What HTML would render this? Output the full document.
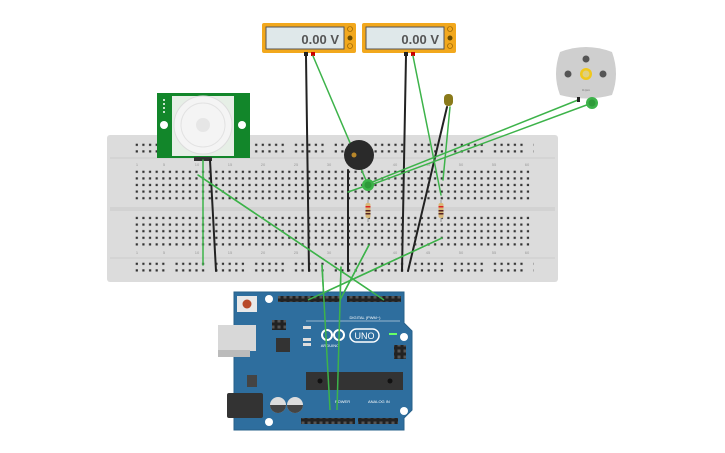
<!DOCTYPE html>
<html><head><style>body{margin:0;background:#fff;}svg{display:block;font-family:"Liberation Sans",sans-serif}</style></head><body>
<svg width="725" height="453" viewBox="0 0 725 453" xmlns="http://www.w3.org/2000/svg">
<defs>
<pattern id="h" x="134.5" y="169.5" width="6.63" height="6.6" patternUnits="userSpaceOnUse"><rect x="1.2" y="1.2" width="2.2" height="2.2" fill="#333"/></pattern>
<pattern id="r" x="134.5" y="142.5" width="39.8" height="6.6" patternUnits="userSpaceOnUse"><g fill="#333"><rect x="1.2" y="1.2" width="2.2" height="2.2"/><rect x="7.8" y="1.2" width="2.2" height="2.2"/><rect x="14.5" y="1.2" width="2.2" height="2.2"/><rect x="21.1" y="1.2" width="2.2" height="2.2"/><rect x="27.7" y="1.2" width="2.2" height="2.2"/></g></pattern>
<pattern id="r2" x="134.5" y="261.5" width="39.8" height="6.6" patternUnits="userSpaceOnUse"><g fill="#333"><rect x="1.2" y="1.2" width="2.2" height="2.2"/><rect x="7.8" y="1.2" width="2.2" height="2.2"/><rect x="14.5" y="1.2" width="2.2" height="2.2"/><rect x="21.1" y="1.2" width="2.2" height="2.2"/><rect x="27.7" y="1.2" width="2.2" height="2.2"/></g></pattern>
<pattern id="hd" x="0" y="0" width="6" height="6" patternUnits="userSpaceOnUse"><rect width="6" height="6" fill="#222"/><rect x="1.5" y="1.5" width="3" height="3" fill="#555"/></pattern>
</defs>
<rect x="107" y="135" width="451" height="147" rx="3" fill="#dcdcdc"/>
<line x1="110" y1="158" x2="555" y2="158" stroke="#ccc"/>
<line x1="110" y1="258" x2="555" y2="258" stroke="#ccc"/>
<rect x="110" y="207" width="445" height="4" fill="#d2d2d2"/>
<rect x="134" y="142" width="400" height="13" fill="url(#r)"/>
<rect x="134" y="261" width="400" height="13" fill="url(#r2)"/>
<rect x="134" y="169" width="398" height="33" fill="url(#h)"/>
<rect x="134" y="215.5" width="398" height="33" fill="url(#h)"/>
<g font-size="4" fill="#999" text-anchor="middle">
<text x="137" y="166">1</text><text x="164" y="166">5</text><text x="197" y="166">10</text><text x="230" y="166">15</text><text x="263" y="166">20</text><text x="296" y="166">25</text><text x="329" y="166">30</text><text x="395" y="166">40</text><text x="428" y="166">45</text><text x="461" y="166">50</text><text x="494" y="166">55</text><text x="527" y="166">60</text>
<text x="137" y="254">1</text><text x="164" y="254">5</text><text x="197" y="254">10</text><text x="230" y="254">15</text><text x="263" y="254">20</text><text x="296" y="254">25</text><text x="329" y="254">30</text><text x="395" y="254">40</text><text x="428" y="254">45</text><text x="461" y="254">50</text><text x="494" y="254">55</text><text x="527" y="254">60</text>
</g>
<g>
<rect x="262" y="23" width="94" height="30" rx="2" fill="#f2a81d"/>
<rect x="266" y="27" width="78" height="22" fill="#dfe8ea" stroke="#555"/>
<text x="339" y="44" font-size="13" font-weight="bold" fill="#555" text-anchor="end">0.00 V</text>
<circle cx="350" cy="29" r="2.5" fill="#f2a81d" stroke="#8a5a00" stroke-width=".6"/><circle cx="350" cy="38" r="2.5" fill="#6a4a00"/><circle cx="350" cy="46" r="2.5" fill="#f2a81d" stroke="#8a5a00" stroke-width=".6"/>
<rect x="304" y="52" width="4" height="4" fill="#222"/><rect x="311" y="52" width="4" height="4" fill="#c00"/>
</g>
<g>
<rect x="362" y="23" width="94" height="30" rx="2" fill="#f2a81d"/>
<rect x="366" y="27" width="78" height="22" fill="#dfe8ea" stroke="#555"/>
<text x="439" y="44" font-size="13" font-weight="bold" fill="#555" text-anchor="end">0.00 V</text>
<circle cx="450" cy="29" r="2.5" fill="#f2a81d" stroke="#8a5a00" stroke-width=".6"/><circle cx="450" cy="38" r="2.5" fill="#6a4a00"/><circle cx="450" cy="46" r="2.5" fill="#f2a81d" stroke="#8a5a00" stroke-width=".6"/>
<rect x="404" y="52" width="4" height="4" fill="#222"/><rect x="411" y="52" width="4" height="4" fill="#c00"/>
</g>
<path d="M560 52 Q586 42 612 52 Q620 74 612 95 Q586 102 560 95 Q552 74 560 52Z" fill="#cfcfcf"/>
<circle cx="568" cy="74" r="3.5" fill="#555"/><circle cx="603" cy="74" r="3.5" fill="#555"/><circle cx="586" cy="59" r="3.5" fill="#555"/>
<circle cx="586" cy="74" r="6" fill="#f0c81c"/><circle cx="586" cy="74" r="3.5" fill="#e0d080"/>
<text x="586" y="91" font-size="3" fill="#666" text-anchor="middle">0 rpm</text>
<rect x="157" y="93" width="93" height="65" fill="#12862a"/>
<rect x="172" y="96" width="62" height="60" fill="#e6efe6"/>
<circle cx="203" cy="125" r="29" fill="#f4f4f4" stroke="#ddd"/>
<circle cx="203" cy="125" r="22" fill="none" stroke="#e2e2e2"/>
<circle cx="203" cy="125" r="7" fill="#e6e6e6"/>
<circle cx="164" cy="125" r="4" fill="#fff"/><circle cx="242" cy="125" r="4" fill="#fff"/>
<g fill="#fff"><circle cx="164" cy="100" r="1"/><circle cx="164" cy="104" r="1"/><circle cx="164" cy="108" r="1"/><circle cx="164" cy="112" r="1"/></g>
<rect x="194" y="157" width="18" height="4" fill="#333"/>
<rect x="444" y="94" width="9" height="12" rx="4" fill="#8a7a1a"/>
<g stroke-linecap="round" fill="none">
<line x1="306" y1="56" x2="309" y2="271" stroke="#222" stroke-width="2"/>
<line x1="406" y1="56" x2="402" y2="271" stroke="#222" stroke-width="2"/>
<line x1="447" y1="107" x2="408" y2="271" stroke="#222" stroke-width="2"/>
<line x1="348" y1="170" x2="348" y2="271" stroke="#222" stroke-width="2"/>
<line x1="210" y1="160" x2="216" y2="271" stroke="#222" stroke-width="2"/>
<g stroke="#3db34a" stroke-width="1.5">
<line x1="313" y1="56" x2="368" y2="185"/>
<line x1="413" y1="56" x2="441" y2="195"/>
<line x1="450" y1="107" x2="443" y2="180"/>
<line x1="348" y1="192" x2="368" y2="185"/>
<line x1="592" y1="103" x2="368" y2="186"/>
<line x1="578" y1="100" x2="370" y2="183"/>
<line x1="203" y1="160" x2="203" y2="265"/>
<line x1="198" y1="175" x2="384" y2="300"/>
<line x1="442" y1="238" x2="308" y2="300"/>
<line x1="369" y1="245" x2="340" y2="300"/>
<line x1="322" y1="265" x2="330" y2="410"/>
<line x1="341" y1="267" x2="337" y2="410"/>
</g>
</g>
<circle cx="359" cy="155" r="15" fill="#2a2a2a"/><circle cx="354" cy="155" r="2.5" fill="#b8862a"/>
<circle cx="368" cy="185" r="6" fill="#3db34a"/><circle cx="368" cy="185" r="3.5" fill="#2f9a3a"/>
<circle cx="592" cy="103" r="6" fill="#3db34a"/><circle cx="592" cy="103" r="3.5" fill="#2f9a3a"/>
<rect x="577" y="97" width="3" height="5" fill="#222"/>
<g><line x1="368" y1="200" x2="368" y2="222" stroke="#999"/><rect x="365.5" y="203" width="5" height="15" rx="2" fill="#d8b878"/><rect x="365.5" y="206" width="5" height="1.5" fill="#d22"/><rect x="365.5" y="210" width="5" height="1.5" fill="#522"/><rect x="365.5" y="213" width="5" height="1.5" fill="#522"/></g>
<g><line x1="441" y1="200" x2="441" y2="222" stroke="#999"/><rect x="438.5" y="203" width="5" height="15" rx="2" fill="#d8b878"/><rect x="438.5" y="206" width="5" height="1.5" fill="#d22"/><rect x="438.5" y="210" width="5" height="1.5" fill="#522"/><rect x="438.5" y="213" width="5" height="1.5" fill="#522"/></g>
<path d="M234 292 H404 L404 323 L412 331 V410 L404 418 V430 H234 Z" fill="#2e6e9e" stroke="#27608a"/>
<rect x="278" y="296" width="62" height="6" fill="url(#hd)"/>
<rect x="347" y="296" width="54" height="6" fill="url(#hd)"/>
<rect x="301" y="418" width="54" height="6" fill="url(#hd)"/>
<rect x="358" y="418" width="40" height="6" fill="url(#hd)"/>
<rect x="237" y="296" width="20" height="16" fill="#e8e8e8"/><circle cx="247" cy="304" r="4.5" fill="#b84a2a"/>
<circle cx="269" cy="299" r="4" fill="#fff"/><circle cx="269" cy="422" r="4" fill="#fff"/><circle cx="404" cy="337" r="4" fill="#fff"/><circle cx="404" cy="411" r="4" fill="#fff"/>
<rect x="218" y="325" width="38" height="26" fill="#d8d8d8"/><rect x="218" y="350" width="32" height="7" fill="#bbb"/>
<rect x="227" y="393" width="36" height="25" rx="2" fill="#333"/>
<rect x="276" y="338" width="14" height="14" fill="#333"/>
<rect x="272" y="320" width="14" height="10" fill="url(#hd)"/>
<rect x="394" y="345" width="12" height="14" fill="url(#hd)"/>
<rect x="306" y="372" width="97" height="18" fill="#333"/>
<circle cx="320" cy="381" r="2.5" fill="#111"/><circle cx="390" cy="381" r="2.5" fill="#111"/>
<rect x="247" y="375" width="10" height="12" fill="#444"/>
<circle cx="278" cy="405" r="8" fill="#ddd"/><path d="M270 405 A8 8 0 0 0 286 405Z" fill="#444"/>
<circle cx="295" cy="405" r="8" fill="#ddd"/><path d="M287 405 A8 8 0 0 0 303 405Z" fill="#444"/>
<rect x="350" y="329" width="29" height="13" rx="6.5" fill="none" stroke="#fff" stroke-width="1.5"/>
<text x="364.5" y="339" font-size="9" fill="#fff" text-anchor="middle">UNO</text>
<circle cx="327" cy="335" r="5" fill="none" stroke="#fff" stroke-width="2"/><circle cx="339" cy="335" r="5" fill="none" stroke="#fff" stroke-width="2"/>
<text x="330" y="347" font-size="4" fill="#fff" text-anchor="middle">ARDUINO</text>
<text x="365" y="319" font-size="4" fill="#fff" text-anchor="middle">DIGITAL (PWM~)</text>
<line x1="306" y1="321" x2="400" y2="321" stroke="#fff" stroke-width=".5"/>
<text x="368" y="403" font-size="4" fill="#fff">ANALOG IN</text><text x="335" y="403" font-size="4" fill="#fff">POWER</text>
<rect x="389" y="333" width="8" height="2" fill="#6f6"/>
<rect x="303" y="326" width="8" height="3" fill="#ddd"/><rect x="303" y="338" width="8" height="3" fill="#ddd"/><rect x="303" y="343" width="8" height="3" fill="#ddd"/>
<g stroke="#3db34a" stroke-width="1.5">
<line x1="198" y1="175" x2="384" y2="300"/><line x1="442" y1="238" x2="308" y2="300"/><line x1="369" y1="245" x2="340" y2="300"/><line x1="322" y1="265" x2="330" y2="410"/><line x1="341" y1="267" x2="337" y2="410"/>
</g>
</svg>
</body></html>
